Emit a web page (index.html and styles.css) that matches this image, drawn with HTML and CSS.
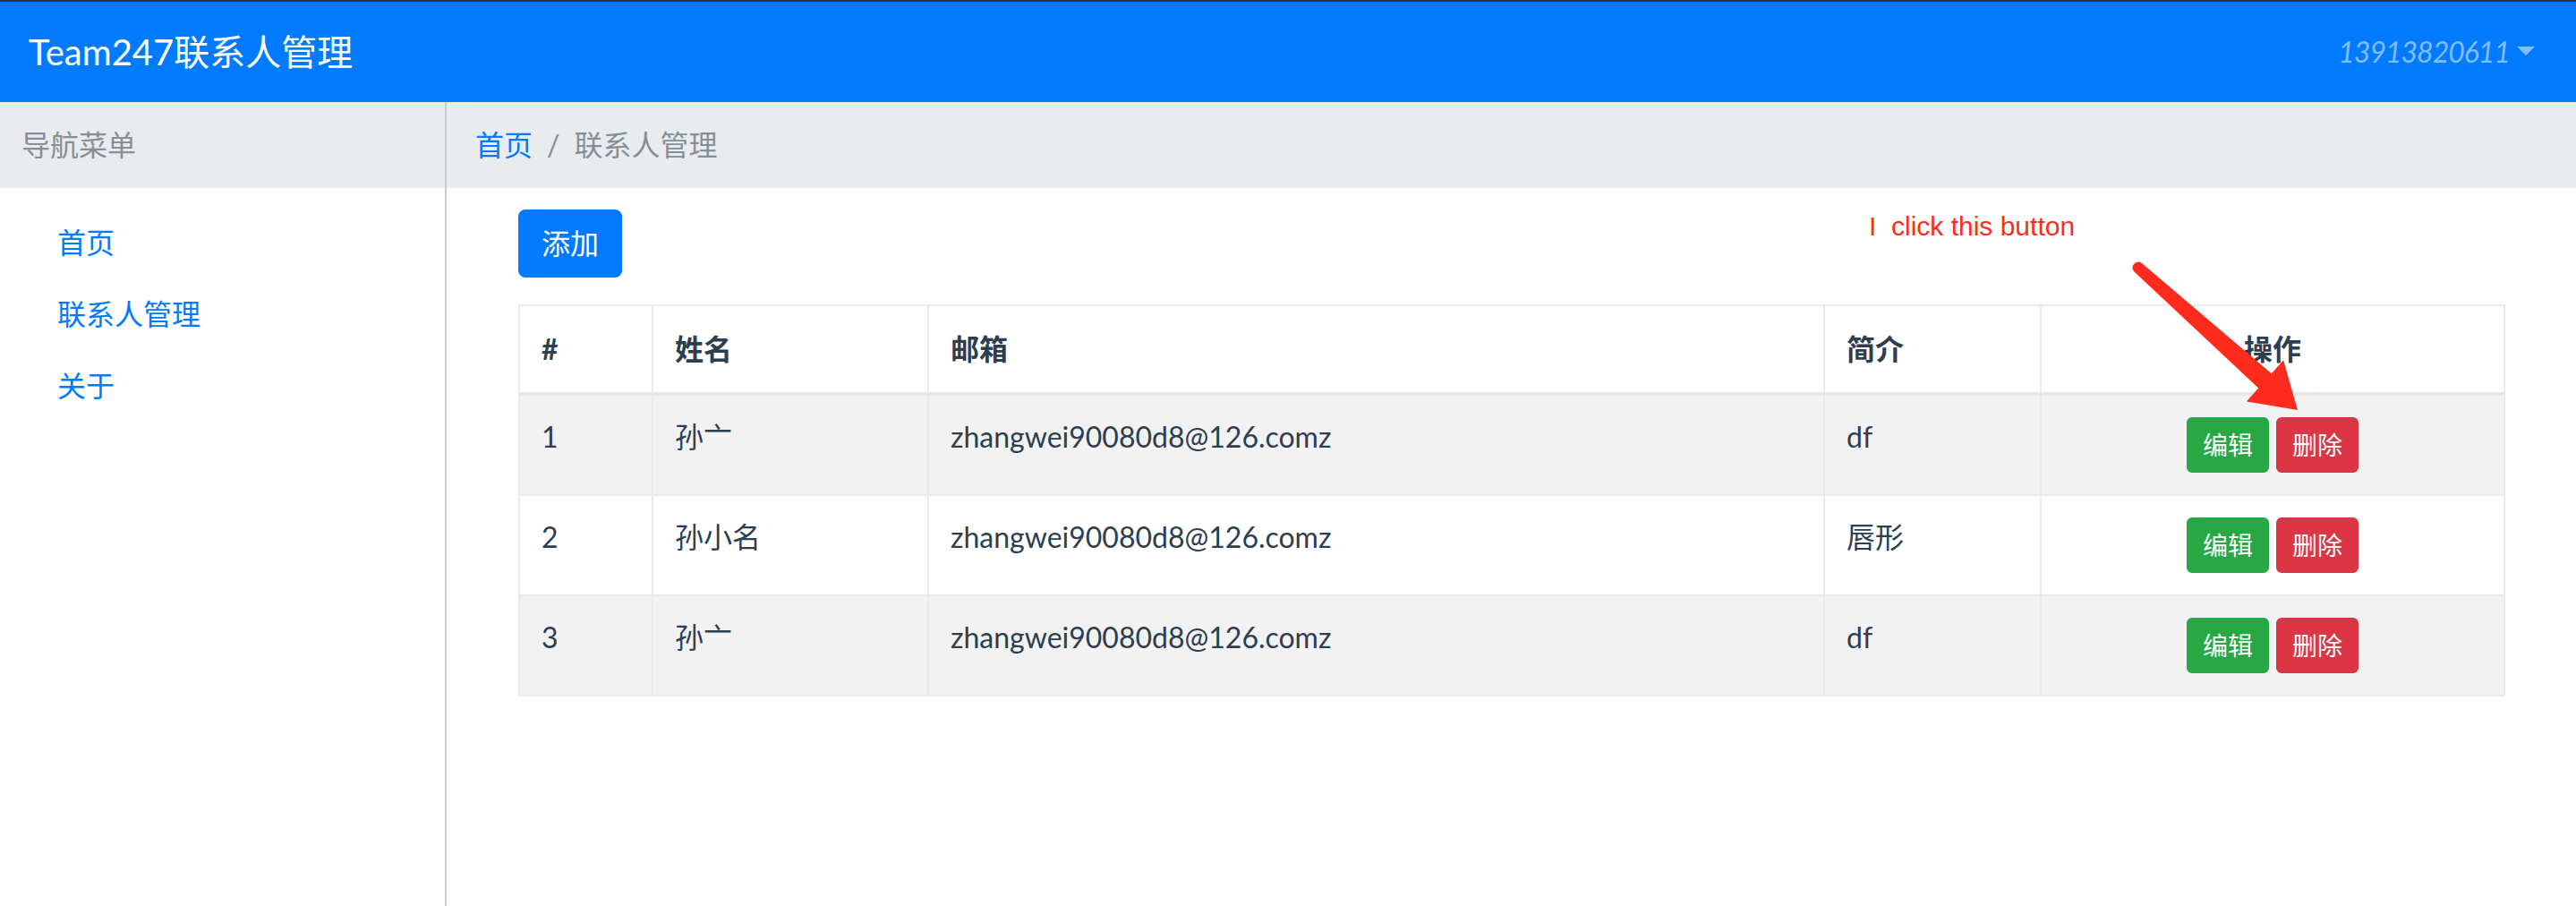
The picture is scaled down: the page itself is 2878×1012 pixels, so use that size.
FILE: index.html
```html
<!DOCTYPE html>
<html lang="zh-CN">

  <head>
    <meta charset="UTF-8">
    <meta name="viewport" content="width=device-width, initial-scale=1.0">
    <title>Team247联系人管理</title>
    <link rel="stylesheet" href="styles.css">
  </head>

  <body>
    <nav class="navbar">
      <a class="brand" href="#">Team247联系人管理</a>
      <a class="user dropdown-toggle" href="#">13913820611</a>
    </nav>

    <div class="layout">
      <aside class="sidebar">
        <div class="sidebar-header">导航菜单</div>
        <ul class="side-nav">
          <li><a href="#">首页</a></li>
          <li><a href="#">联系人管理</a></li>
          <li><a href="#">关于</a></li>
        </ul>
      </aside>

      <main class="main">
        <ol class="breadcrumb">
          <li><a href="#">首页</a></li>
          <li class="active">联系人管理</li>
        </ol>

        <div class="content">
          <button class="btn btn-primary">添加</button>

          <table class="table">
            <colgroup>
              <col class="col-id">
              <col class="col-name">
              <col class="col-email">
              <col class="col-intro">
              <col>
            </colgroup>
            <thead>
              <tr>
                <th>#</th>
                <th>姓名</th>
                <th>邮箱</th>
                <th>简介</th>
                <th class="actions">操作</th>
              </tr>
            </thead>
            <tbody>
              <tr>
                <td>1</td>
                <td>孙亠</td>
                <td>zhangwei90080d8@126.comz</td>
                <td>df</td>
                <td class="actions"><button class="btn btn-sm btn-success">编辑</button><button class="btn btn-sm btn-danger">删除</button></td>
              </tr>
              <tr>
                <td>2</td>
                <td>孙小名</td>
                <td>zhangwei90080d8@126.comz</td>
                <td>唇形</td>
                <td class="actions"><button class="btn btn-sm btn-success">编辑</button><button class="btn btn-sm btn-danger">删除</button></td>
              </tr>
              <tr>
                <td>3</td>
                <td>孙亠</td>
                <td>zhangwei90080d8@126.comz</td>
                <td>df</td>
                <td class="actions"><button class="btn btn-sm btn-success">编辑</button><button class="btn btn-sm btn-danger">删除</button></td>
              </tr>
            </tbody>
          </table>
        </div>
      </main>
    </div>

    <!-- screenshot note drawn on top -->
    <div class="note">I&nbsp; click this button</div>
    <svg class="arrow" viewBox="2370 280 210 190">
      <circle cx="2389" cy="299" r="6.5" fill="#ff2b1c" />
      <polygon fill="#ff2b1c"
        points="2384.7,303.8 2523.2,433.6 2509.9,448.5 2567,458 2551.1,402.3 2537.8,417.2 2393.3,294.2" />
    </svg>
  </body>

</html>
```

FILE: styles.css
```css
* {
  box-sizing: border-box;
}

body {
  margin: 0;
  font-family: Lato, "Noto Sans CJK SC", sans-serif;
  font-size: 32px;
  line-height: 1.5;
  color: #2c3e50;
  background-color: #fff;
}

a {
  text-decoration: none;
  color: #007bff;
}

.navbar {
  height: 114px;
  border-top: 2px solid #2d3045;
  background-color: #007bff;
  display: flex;
  align-items: center;
  justify-content: space-between;
  padding: 0 32px;
}

.brand {
  color: #fff;
  font-size: 40px;
  line-height: 60px;
  padding: 10px 0;
}

.user {
  color: #80bdff;
  font-style: italic;
  letter-spacing: -1px;
  margin-right: 14px;
}

.dropdown-toggle::after {
  content: "";
  display: inline-block;
  margin-left: 8px;
  vertical-align: 0.26em;
  border-top: 10px solid;
  border-left: 10px solid transparent;
  border-right: 10px solid transparent;
}

.layout {
  display: flex;
  min-height: calc(100vh - 114px);
}

.sidebar {
  width: 499px;
  flex-shrink: 0;
  border-right: 2px solid #cbcbcb;
}

.sidebar-header {
  background-color: #e9ecef;
  color: #868e96;
  padding: 24px;
}

.side-nav {
  list-style: none;
  margin: 0;
  padding: 21px 32px;
}

.side-nav a {
  display: block;
  padding: 16px 32px;
}

.main {
  flex: 1;
}

.breadcrumb {
  display: flex;
  list-style: none;
  margin: 0;
  padding: 24px 32px;
  background-color: #e9ecef;
}

.breadcrumb li + li::before {
  content: "/";
  color: #868e96;
  padding: 0 16px;
}

.breadcrumb .active {
  color: #868e96;
}

.content {
  padding: 24px 79px 0 80px;
}

.btn {
  display: inline-block;
  font-family: inherit;
  font-size: 32px;
  line-height: 48px;
  padding: 12px 24px;
  border: 2px solid transparent;
  border-radius: 8px;
  color: #fff;
  cursor: pointer;
}

.btn-primary {
  background-color: #007bff;
  border-color: #007bff;
  margin-bottom: 30px;
}

.btn-sm {
  font-size: 28px;
  line-height: 42px;
  padding: 8px 16px;
  border-radius: 6px;
}

.btn-success {
  background-color: #28a745;
  border-color: #28a745;
}

.btn-danger {
  background-color: #dc3545;
  border-color: #dc3545;
}

.btn-sm + .btn-sm {
  margin-left: 8px;
}

.table {
  width: 100%;
  table-layout: fixed;
  border-collapse: collapse;
  border: 2px solid #e3e7ea;
}

.col-id {
  width: 149px;
}

.col-name {
  width: 308px;
}

.col-email {
  width: 1001px;
}

.col-intro {
  width: 242px;
}

.table th,
.table td {
  text-align: left;
  vertical-align: top;
  padding: 24px;
  border: 2px solid #e8ebee;
}

.table td {
  padding-top: 22px;
}

.table td.actions {
  padding-top: 24px;
}

.table th {
  font-weight: 700;
}

.table thead th {
  border-bottom: 4px solid #e3e7ea;
}

.table tbody tr:nth-child(odd) {
  background-color: #f2f2f2;
}

.table .actions {
  text-align: center;
}

.note {
  position: absolute;
  left: 2088px;
  top: 238px;
  font-family: "Liberation Sans", sans-serif;
  font-size: 30px;
  line-height: 1;
  color: #ff2b1c;
}

.arrow {
  position: absolute;
  left: 2370px;
  top: 280px;
  width: 210px;
  height: 190px;
  pointer-events: none;
}
```
